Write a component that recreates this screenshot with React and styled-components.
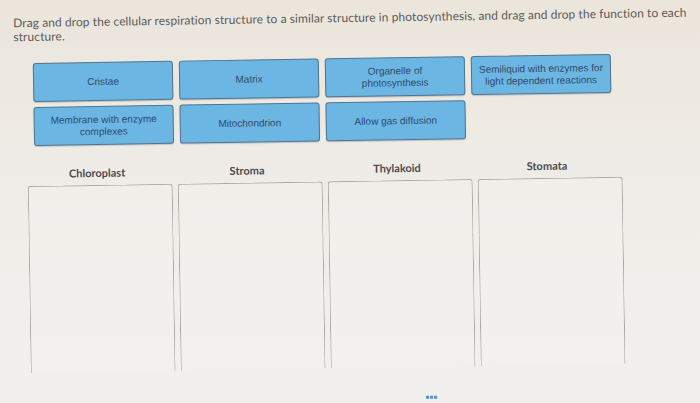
import React from "react";
import styled, { createGlobalStyle } from "styled-components";

const Global = createGlobalStyle`
  html, body {
    margin: 0;
    padding: 0;
    overflow: hidden;
    width: 700px;
    height: 403px;
    background: linear-gradient(180deg, #ebe5db 0%, #eeebe5 35%, #f0efeb 70%, #f1f0ed 100%);
  }
`;

const Page = styled.div`
  width: 700px;
  height: 403px;
  box-sizing: border-box;
  padding-top: 11px;
  transform: rotate(-0.9deg);
  transform-origin: 350px 201px;
  font-family: Lato, "Open Sans", sans-serif;
`;

const Prompt = styled.p`
  margin: 0 0 0 16px;
  width: 680px;
  font-size: 12px;
  letter-spacing: 0.08px;
  line-height: 14px;
  color: #5c5a58;
`;

const ChipGrid = styled.div`
  display: grid;
  grid-template-columns: repeat(4, 140px);
  grid-auto-rows: 39px;
  column-gap: 6px;
  row-gap: 5px;
  margin: 19px 0 0 35px;
`;

const Chip = styled.div`
  box-sizing: border-box;
  display: flex;
  align-items: center;
  justify-content: center;
  text-align: center;
  background: #6cb6e4;
  border: 1px solid #4f7592;
  border-radius: 3px;
  box-shadow: 0 1px 1px rgba(60, 80, 100, 0.25);
  font-family: "Liberation Sans", Arial, sans-serif;
  font-size: 10px;
  line-height: 12px;
  color: #2f4b68;
`;

const Columns = styled.div`
  display: grid;
  grid-template-columns: repeat(4, 145px);
  column-gap: 5px;
  margin: 21px 0 0 28px;
`;

const Column = styled.div`
  display: flex;
  flex-direction: column;
  align-items: stretch;
`;

const Label = styled.div`
  text-align: center;
  font-size: 11px;
  font-weight: 700;
  line-height: 14px;
  color: #4c4b50;
  margin-bottom: 5px;
  padding-right: 6px;
`;

const DropZone = styled.div`
  height: 187px;
  box-sizing: border-box;
  border: 1px solid #aaa9a6;
  border-bottom: none;
  border-radius: 3px 3px 0 0;
  background: rgba(245, 244, 241, 0.35);
`;

const More = styled.div`
  display: flex;
  gap: 1px;
  margin: 29px 0 0 423px;
`;

const Dot = styled.span`
  width: 3px;
  height: 3px;
  background: #5b8ed2;
`;

const chips = [
  ["Cristae"],
  ["Matrix"],
  ["Organelle of", "photosynthesis"],
  ["Semiliquid with enzymes for", "light dependent reactions"],
  ["Membrane with enzyme", "complexes"],
  ["Mitochondrion"],
  ["Allow gas diffusion"],
];

const targets = ["Chloroplast", "Stroma", "Thylakoid", "Stomata"];

export default function App() {
  return (
    <>
      <Global />
      <Page>
        <Prompt>
          Drag and drop the cellular respiration structure to a similar structure in
          photosynthesis, and drag and drop the function to each structure.
        </Prompt>
        <ChipGrid>
          {chips.map((lines, i) => (
            <Chip key={i}>
              <span>
                {lines.map((l, j) => (
                  <React.Fragment key={j}>
                    {j > 0 && <br />}
                    {l}
                  </React.Fragment>
                ))}
              </span>
            </Chip>
          ))}
        </ChipGrid>
        <Columns>
          {targets.map((t) => (
            <Column key={t}>
              <Label>{t}</Label>
              <DropZone />
            </Column>
          ))}
        </Columns>
        <More>
          <Dot />
          <Dot />
          <Dot />
        </More>
      </Page>
    </>
  );
}
